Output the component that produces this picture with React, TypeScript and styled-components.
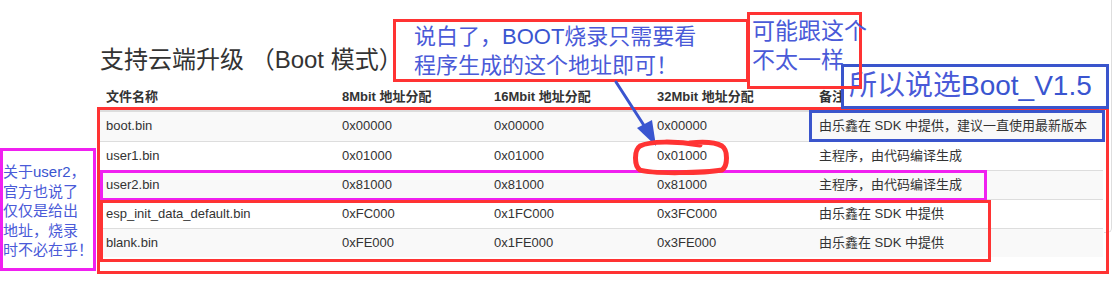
import React from 'react'
import styled, { createGlobalStyle, css } from 'styled-components'

const GlobalStyle = createGlobalStyle`
  html, body {
    margin: 0;
    padding: 0;
    background: #ffffff;
  }
  body {
    font-family: "Liberation Sans", "Noto Sans CJK SC", sans-serif;
  }
`

const RED = '#ff3333'
const PINK = '#f020f0'
const BLUE = '#3a55cc'
const INK = '#4a5ad8'

const Page = styled.div`
  position: relative;
  width: 1115px;
  height: 291px;
  overflow: hidden;
  background: #ffffff;
  padding: 43px 0 0 99px;
  box-sizing: border-box;
  color: #333333;
`

const PanelEdge = styled.div`
  position: absolute;
  top: -4px;
  left: 1104px;
  width: 7px;
  height: 236px;
  border-right: 1px solid #dedede;
  border-bottom: 1px solid #dedede;
  border-bottom-right-radius: 5px;
`

const Title = styled.h2`
  margin: 0 0 0 1px;
  font-size: 24px;
  font-weight: normal;
  line-height: 34px;
  height: 41px;
  color: #333333;
`

// a hand-drawn rectangle around a part of the table, given as offsets from its edges
type Mark = { color: string; top: number; left: number; right: number; bottom: number }

const marked = (m?: Mark) =>
  m &&
  css`
    position: relative;
    &::after {
      content: '';
      position: absolute;
      top: ${m.top}px;
      left: ${m.left}px;
      right: ${m.right}px;
      bottom: ${m.bottom}px;
      border: 3px solid ${m.color};
      pointer-events: none;
      z-index: 2;
    }
  `

const Table = styled.div`
  display: flex;
  flex-direction: column;
  width: 1004px;
  font-size: 13px;
`

const Row = styled.div<{ $mark?: Mark }>`
  display: grid;
  grid-template-columns: 236px 152px 163px 162px 291px;
  ${(p) => marked(p.$mark)}
`

const Group = styled.div<{ $mark?: Mark }>`
  display: flex;
  flex-direction: column;
  ${(p) => marked(p.$mark)}
`

const HeadCell = styled.div`
  height: 26px;
  line-height: 26px;
  padding-left: 7px;
  font-weight: bold;
  white-space: nowrap;
  border-bottom: 2px solid #dddddd;
`

const Cell = styled.div<{ $striped: boolean; $first: boolean; $mark?: Mark }>`
  height: ${(p) => (p.$first ? 29 : 28)}px;
  line-height: 28px;
  padding-left: 7px;
  white-space: nowrap;
  background: ${(p) => (p.$striped ? '#f9f9f9' : '#ffffff')};
  border-top: ${(p) => (p.$first ? 'none' : '1px solid #dddddd')};
  ${(p) => marked(p.$mark)}
`

const Callout = styled.div<{
  $x: number
  $y: number
  $w: number
  $h: number
  $color: string
  $pad: string
  $size: number
  $line: number
  $clear?: boolean
}>`
  position: absolute;
  left: ${(p) => p.$x}px;
  top: ${(p) => p.$y}px;
  width: ${(p) => p.$w}px;
  height: ${(p) => p.$h}px;
  box-sizing: border-box;
  border: 3px solid ${(p) => p.$color};
  padding: ${(p) => p.$pad};
  background: ${(p) => (p.$clear ? 'transparent' : '#ffffff')};
  font-size: ${(p) => p.$size}px;
  line-height: ${(p) => p.$line}px;
  color: ${INK};
  white-space: nowrap;
  z-index: ${(p) => (p.$clear ? 5 : 3)};
`

const Strong = styled.span`
  color: #3a55d0;
`

const Overlay = styled.svg`
  position: absolute;
  left: 0;
  top: 0;
  pointer-events: none;
  z-index: 4;
`

const headers = ['文件名称', '8Mbit 地址分配', '16Mbit 地址分配', '32Mbit 地址分配', '备注']

const rows = [
  ['boot.bin', '0x00000', '0x00000', '0x00000', '由乐鑫在 SDK 中提供，建议一直使用最新版本'],
  ['user1.bin', '0x01000', '0x01000', '0x01000', '主程序，由代码编译生成'],
  ['user2.bin', '0x81000', '0x81000', '0x81000', '主程序，由代码编译生成'],
  ['esp_init_data_default.bin', '0xFC000', '0x1FC000', '0x3FC000', '由乐鑫在 SDK 中提供'],
  ['blank.bin', '0xFE000', '0x1FE000', '0x3FE000', '由乐鑫在 SDK 中提供'],
]

const bodyMark: Mark = { color: RED, top: -5, left: -2, right: -6, bottom: -17 }
const user2Mark: Mark = { color: PINK, top: 0, left: 1, right: 116, bottom: -2 }
const sdkMark: Mark = { color: RED, top: 1, left: 1, right: 112, bottom: -5 }
const noteMark: Mark = { color: BLUE, top: -2, left: -3, right: -2, bottom: -1 }

const renderRow = (row: string[], i: number, mark?: Mark) => (
  <Row key={row[0]} $mark={mark}>
    {row.map((c, j) => (
      <Cell
        key={j}
        $striped={i % 2 === 0}
        $first={i === 0}
        $mark={i === 0 && j === 4 ? noteMark : undefined}
      >
        {c}
      </Cell>
    ))}
  </Row>
)

const App = () => {
  return (
    <>
      <GlobalStyle />
      <Page>
        <PanelEdge />
        <Title>支持云端升级 （Boot 模式）</Title>
        <Table>
          <Row>
            {headers.map((h) => (
              <HeadCell key={h}>{h}</HeadCell>
            ))}
          </Row>
          <Group $mark={bodyMark}>
            {renderRow(rows[0], 0)}
            {renderRow(rows[1], 1)}
            {renderRow(rows[2], 2, user2Mark)}
            <Group $mark={sdkMark}>
              {renderRow(rows[3], 3)}
              {renderRow(rows[4], 4)}
            </Group>
          </Group>
        </Table>

        <Callout $x={393} $y={19} $w={356} $h={63} $color={RED} $pad="0 0 0 18px" $size={22} $line={29}>
          说白了，<Strong>BOOT</Strong>烧录只需要看
          <br />
          程序生成的这个地址即可！
        </Callout>

        <Callout $x={841} $y={64} $w={268} $h={45} $color={BLUE} $pad="1px 0 0 5px" $size={28} $line={36}>
          所以说选<Strong>Boot_V1.5</Strong>
        </Callout>

        <Callout $x={747} $y={12} $w={115} $h={77} $color={RED} $pad="2px 0 0 2px" $size={23} $line={29} $clear>
          可能跟这个
          <br />
          不太一样
        </Callout>

        <Callout $x={0} $y={148} $w={96} $h={123} $color={PINK} $pad="11px 0 0 0" $size={15} $line={19.5}>
          关于<Strong>user2</Strong>，
          <br />
          官方也说了
          <br />
          仅仅是给出
          <br />
          地址，烧录
          <br />
          时不必在乎！
        </Callout>

        <Overlay width="1115" height="291" viewBox="0 0 1115 291">
          <line x1="616" y1="82" x2="645" y2="127" stroke="#3a55d0" strokeWidth="3" strokeLinecap="round" />
          <polygon points="637,128 652,120 656,146" fill="#3a55d0" />
          <path
            d="M 700 145 C 676 141 650 141 640 146 C 634 150 634 166 640 170 C 652 174 705 173 722 170 C 728 166 728 150 722 146 C 715 142 700 142 690 143"
            fill="none"
            stroke={RED}
            strokeWidth="5"
            strokeLinecap="round"
          />
        </Overlay>
      </Page>
    </>
  )
}

export default App
